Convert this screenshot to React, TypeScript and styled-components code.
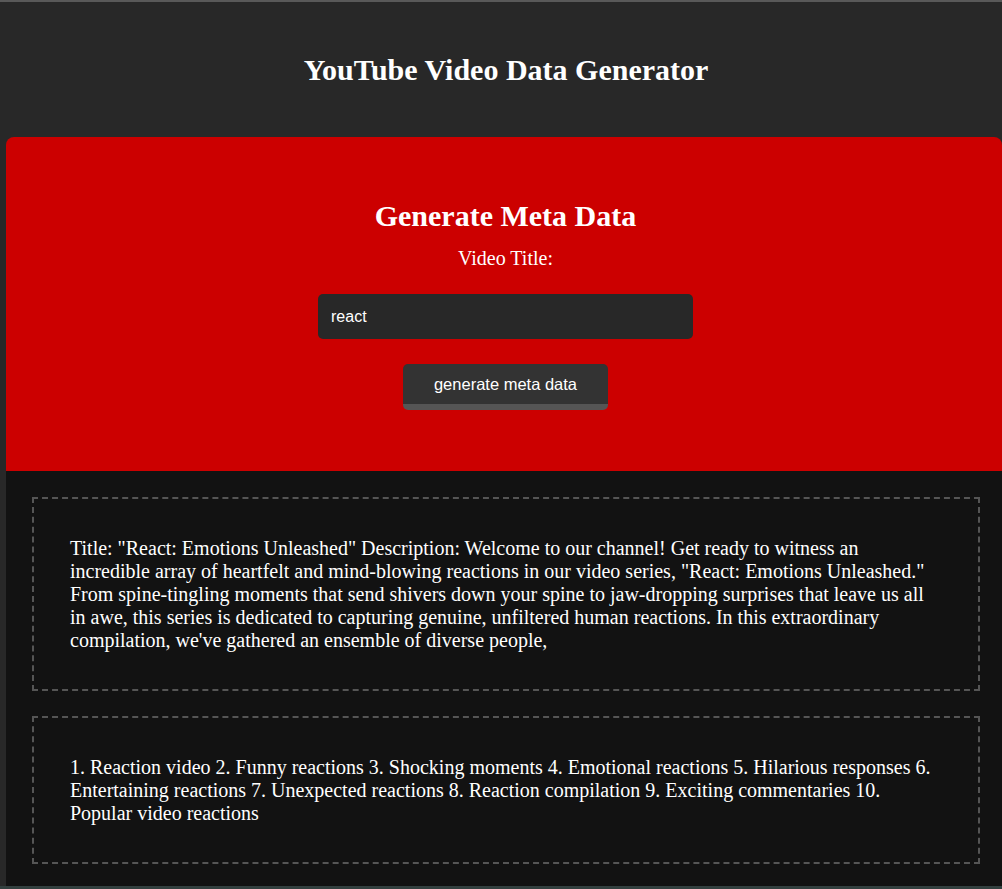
import React, { useState } from "react";
import styled, { createGlobalStyle } from "styled-components";

const GlobalStyle = createGlobalStyle`
  html, body {
    margin: 0;
    padding: 0;
    background-color: #282828;
  }
  body {
    font-family: "Liberation Serif", "Times New Roman", serif;
    color: #fff;
  }
`;

const description =
  'Title: "React: Emotions Unleashed" Description: Welcome to our channel! Get ready to witness an incredible array of heartfelt and mind-blowing reactions in our video series, "React: Emotions Unleashed." From spine-tingling moments that send shivers down your spine to jaw-dropping surprises that leave us all in awe, this series is dedicated to capturing genuine, unfiltered human reactions. In this extraordinary compilation, we\'ve gathered an ensemble of diverse people,';

const tags =
  "1. Reaction video 2. Funny reactions 3. Shocking moments 4. Emotional reactions 5. Hilarious responses 6. Entertaining reactions 7. Unexpected reactions 8. Reaction compilation 9. Exciting commentaries 10. Popular video reactions";

const App = () => {
  const [title, setTitle] = useState("react");

  return (
    <Page>
      <GlobalStyle />
      <Header>
        <h1 className="app-title">YouTube Video Data Generator</h1>
      </Header>
      <Main>
        <GeneratorCard>
          <h2 className="card-title">Generate Meta Data</h2>
          <label className="field-label" htmlFor="video-title">
            Video Title:
          </label>
          <TitleInput
            id="video-title"
            value={title}
            onChange={(e) => setTitle(e.target.value)}
          />
          <Button>generate meta data</Button>
        </GeneratorCard>
        <Results>
          <ResultBox>
            <p>{description}</p>
          </ResultBox>
          <ResultBox>
            <p>{tags}</p>
          </ResultBox>
        </Results>
      </Main>
    </Page>
  );
};
export default App;

const Page = styled.div`
  border-top: 2px solid #595959;
  border-bottom: 3px solid #33403f;
  display: flex;
  flex-direction: column;
`;

const Header = styled.header`
  height: 135px;
  padding-left: 10px;
  display: flex;
  align-items: center;
  justify-content: center;
  .app-title {
    margin: 0;
    font-size: 30px;
    font-weight: 700;
    line-height: 34px;
  }
`;

const Main = styled.main`
  margin-left: 6px;
  display: flex;
  flex-direction: column;
`;

const GeneratorCard = styled.section`
  background-color: #cc0000;
  border-radius: 8px 8px 0 0;
  height: 334px;
  box-sizing: border-box;
  padding: 63px 0 0 3px;
  display: flex;
  flex-direction: column;
  align-items: center;
  .card-title {
    margin: 0;
    font-size: 30px;
    font-weight: 700;
    line-height: 32px;
  }
  .field-label {
    margin-top: 15px;
    font-size: 20px;
    line-height: 23px;
  }
`;

const TitleInput = styled.input`
  margin-top: 24px;
  width: 375px;
  height: 45px;
  box-sizing: border-box;
  padding: 0 13px;
  background-color: #282828;
  color: #fff;
  border: 0;
  border-radius: 5px;
  outline: none;
  font-family: "Liberation Sans", Arial, sans-serif;
  font-size: 16px;
`;

const Button = styled.button`
  margin-top: 25px;
  width: 205px;
  height: 46px;
  box-sizing: border-box;
  background-color: #333;
  color: #fff;
  border: 0;
  border-bottom: 6px solid #555;
  border-radius: 5px;
  padding: 0;
  font-family: "Liberation Sans", Arial, sans-serif;
  font-size: 16.5px;
  cursor: pointer;
`;

const Results = styled.section`
  background-color: #121212;
  padding: 26px 22px 22px 26px;
  display: flex;
  flex-direction: column;
  gap: 25px;
`;

const ResultBox = styled.div`
  border: 2px dashed #555;
  padding: 38px 36px 37px;
  p {
    margin: 0;
    font-size: 20px;
    line-height: 23px;
  }
`;
